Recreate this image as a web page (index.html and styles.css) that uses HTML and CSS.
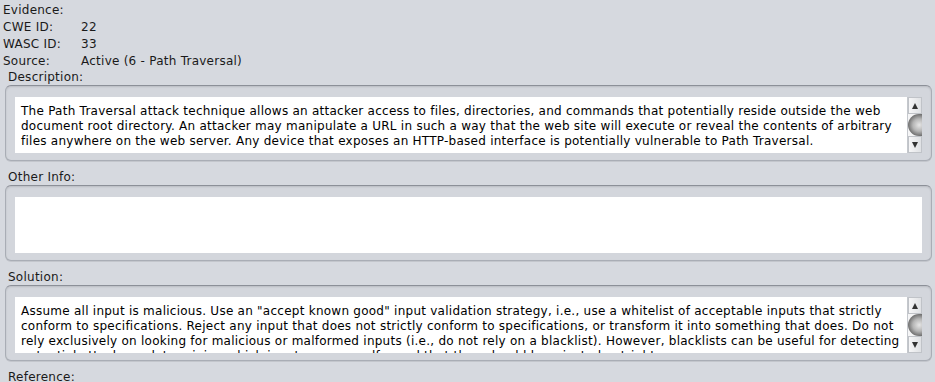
FILE: index.html
```html
<!DOCTYPE html>
<html>
<head>
<meta charset="utf-8">
<link rel="stylesheet" href="styles.css">
</head>
<body>
<div class="page">
  <div class="fields">
    <div class="row"><span class="key">Evidence:</span><span class="val"></span></div>
    <div class="row"><span class="key">CWE ID:</span><span class="val">22</span></div>
    <div class="row"><span class="key">WASC ID:</span><span class="val">33</span></div>
    <div class="row"><span class="key">Source:</span><span class="val">Active (6 - Path Traversal)</span></div>
  </div>

  <div class="label first">Description:</div>
  <div class="panel">
    <div class="text">
      <span class="line">The Path Traversal attack technique allows an attacker access to files, directories, and commands that potentially reside outside the web</span>
      <span class="line">document root directory. An attacker may manipulate a URL in such a way that the web site will execute or reveal the contents of arbitrary</span>
      <span class="line">files anywhere on the web server. Any device that exposes an HTTP-based interface is potentially vulnerable to Path Traversal.</span>
    </div>
    <div class="scrollbar">
      <div class="btn"><span class="arrow up"></span></div>
      <div class="track"><div class="thumb"></div></div>
      <div class="btn"><span class="arrow down"></span></div>
    </div>
  </div>

  <div class="label">Other Info:</div>
  <div class="panel">
    <div class="text"></div>
  </div>

  <div class="label">Solution:</div>
  <div class="panel">
    <div class="text">
      <span class="line">Assume all input is malicious. Use an "accept known good" input validation strategy, i.e., use a whitelist of acceptable inputs that strictly</span>
      <span class="line">conform to specifications. Reject any input that does not strictly conform to specifications, or transform it into something that does. Do not</span>
      <span class="line">rely exclusively on looking for malicious or malformed inputs (i.e., do not rely on a blacklist). However, blacklists can be useful for detecting</span>
      <span class="line">potential attacks or determining which inputs are so malformed that they should be rejected outright.</span>
    </div>
    <div class="scrollbar">
      <div class="btn"><span class="arrow up"></span></div>
      <div class="track"><div class="thumb"></div></div>
      <div class="btn"><span class="arrow down"></span></div>
    </div>
  </div>

  <div class="label">Reference:</div>
</div>
</body>
</html>
```

FILE: styles.css
```css
html, body {
  margin: 0;
  padding: 0;
  background: #d6d9df;
  overflow: hidden;
}
body {
  width: 935px;
  height: 382px;
  font-family: "DejaVu Sans", "Noto Sans", sans-serif;
  font-size: 12px;
  letter-spacing: 0.25px;
  color: #1a1a1a;
}
.page {
  padding-top: 2px;
}
.fields .row {
  display: flex;
  height: 17px;
  line-height: 17px;
  padding-left: 3px;
}
.key {
  width: 78px;
}
.label {
  height: 16px;
  line-height: 16px;
  padding-left: 8px;
  margin-top: 8px;
}
.label.first {
  margin-top: -1px;
}
.panel {
  display: flex;
  box-sizing: border-box;
  margin-left: 5px;
  width: 927px;
  height: 76px;
  padding: 11px 9px 7px 9px;
  border: 1px solid #a9adb5;
  border-top-color: #8c9098;
  border-radius: 6px;
  box-shadow: inset 0 1px 2px rgba(0,0,0,0.12), 0 1px 0 #c3c6cc;
  background: #d3d6dc;
}
.text {
  flex: 1;
  background: #ffffff;
  padding: 7px 6px 0 6px;
  overflow: hidden;
  color: #000;
  line-height: 15px;
}
.line {
  display: block;
  white-space: nowrap;
}
.scrollbar {
  width: 15px;
  display: flex;
  flex-direction: column;
  background: #f2f3f4;
  border-left: 1px solid #c5c8cd;
  box-sizing: border-box;
}
.btn {
  height: 17px;
  display: flex;
  align-items: center;
  justify-content: center;
  background: linear-gradient(to right, #f6f6f7, #dfe1e4);
  border: 1px solid #c0c3c8;
  box-sizing: border-box;
}
.arrow {
  width: 0;
  height: 0;
  border-left: 3px solid transparent;
  border-right: 3px solid transparent;
}
.arrow.up {
  border-bottom: 6px solid #333;
}
.arrow.down {
  border-top: 6px solid #333;
}
.track {
  flex: 1;
  display: flex;
  background: #f5f5f6;
}
.thumb {
  flex: 1;
  border-radius: 11px 0 0 11px / 11px 0 0 11px;
  background: radial-gradient(ellipse at 80% 50%, #e6e6e6 0%, #b5b5b5 40%, #5a5a5a 80%, #3a3a3a 100%);
}
```
